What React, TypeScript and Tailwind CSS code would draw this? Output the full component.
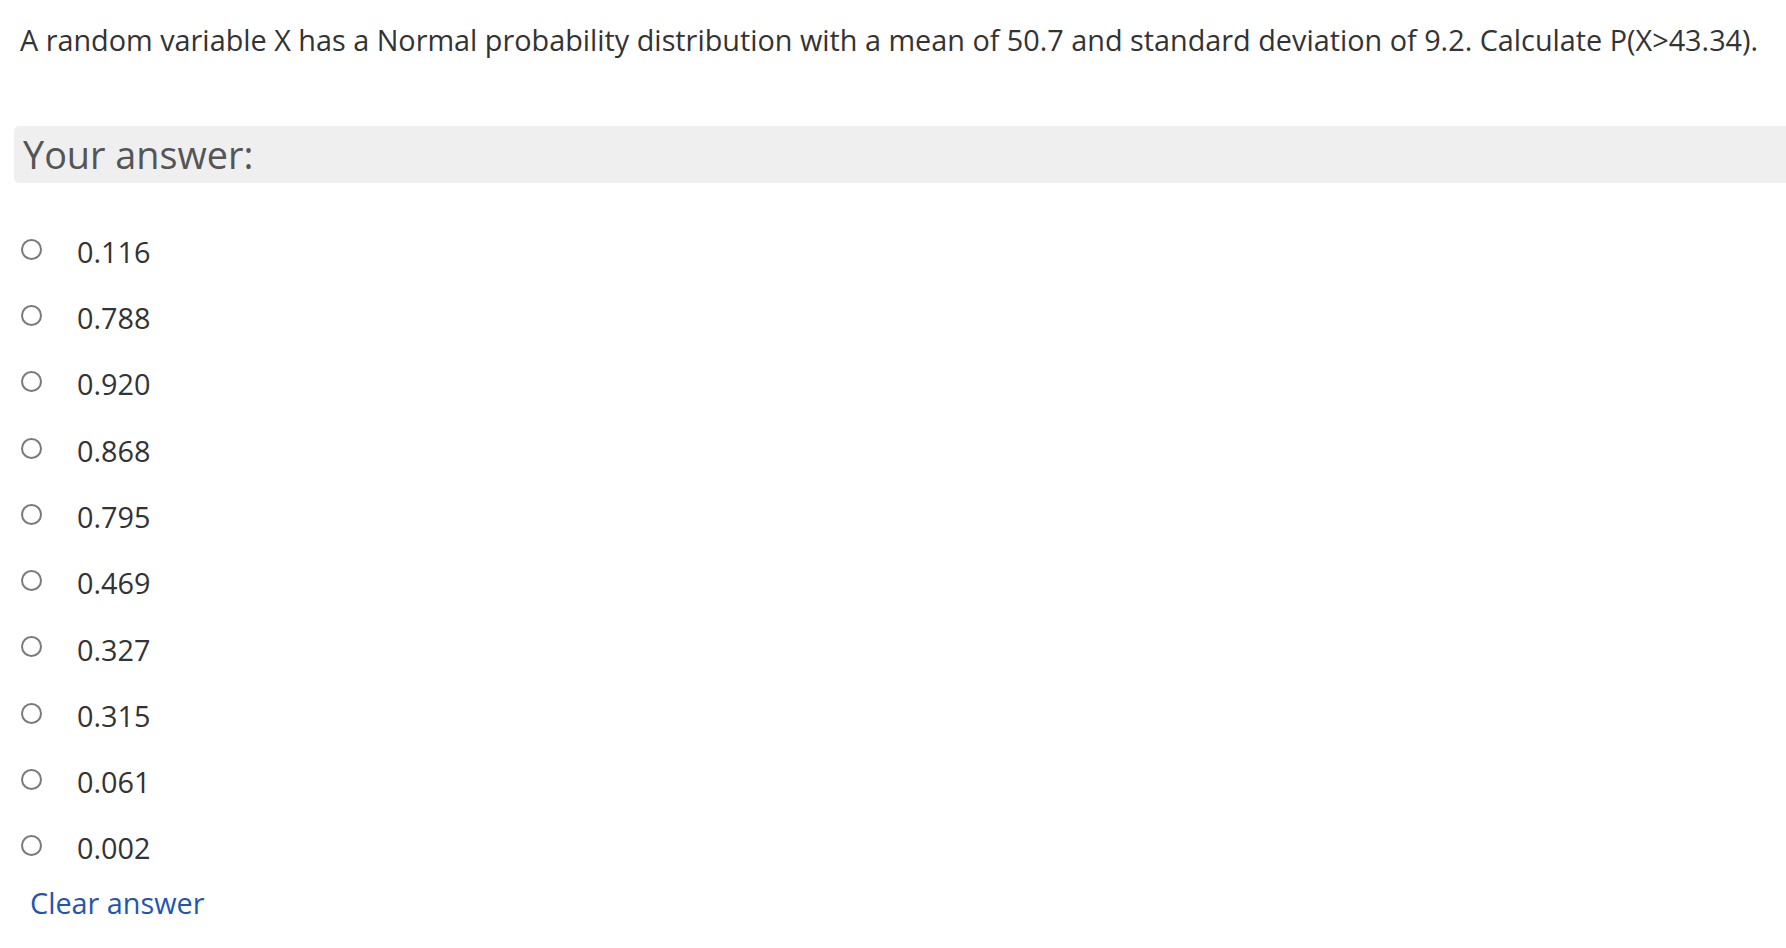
import React from "react";

const options = ["0.116", "0.788", "0.920", "0.868", "0.795", "0.469", "0.327", "0.315", "0.061", "0.002"];

export default function App() {
  return (
    <div className="min-h-screen bg-white text-[#333333]" style={{ fontFamily: '"Open Sans", "Noto Sans", sans-serif' }}>
      <div className="pl-[20px] pt-[20px] h-[126px]">
        <p className="text-[28.8px] leading-[40px] whitespace-nowrap">
          A random variable X has a Normal probability distribution with a mean of 50.7 and standard deviation of 9.2. Calculate P(X&gt;43.34).
        </p>
      </div>
      <div className="ml-[14px] h-[57px] bg-[#efefef] rounded-l-[5px] flex items-center pl-[9px]">
        <span className="text-[37.8px] text-[#555555] leading-none">Your answer:</span>
      </div>
      <div className="pt-[33px] pl-[21px] flex flex-col">
        {options.map((o) => (
          <label key={o} className="flex items-center h-[66.3px]">
            <span className="w-[21px] h-[21px] rounded-full border-[2px] border-[#7a7a7a] bg-white shrink-0" />
            <span className="ml-[35px] pt-[6px] text-[28.8px] leading-none">{o}</span>
          </label>
        ))}
      </div>
      <div className="pl-[30px] mt-[10px]">
        <span className="text-[28.8px] text-[#1f56b0] leading-none">Clear answer</span>
      </div>
    </div>
  );
}
